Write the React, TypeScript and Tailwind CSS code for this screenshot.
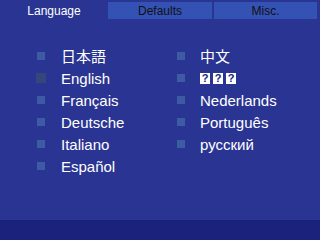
import React from "react";

const left = ["日本語", "English", "Français", "Deutsche", "Italiano", "Español"];
const right = ["中文", "???", "Nederlands", "Português", "русский"];

function Bullet({ selected }: { selected?: boolean }) {
  return (
    <div className="w-2 h-2 flex items-center justify-center shrink-0 overflow-visible">
      {selected ? (
        <div className="w-[10px] h-[10px] shrink-0 bg-[#36457c]" />
      ) : (
        <div className="w-2 h-2 shrink-0 bg-[#3d5aa3]" />
      )}
    </div>
  );
}

function Row({ label, selected, gap }: { label: string; selected?: boolean; gap: string }) {
  return (
    <div className="h-[22px] flex items-center">
      <Bullet selected={selected} />
      {label === "???" ? (
        <div className={`flex gap-[3px] ${gap}`}>
          {[0, 1, 2].map((i) => (
            <span
              key={i}
              className="w-[10px] h-[11px] bg-white text-[#1a237e] text-[11px] leading-[11px] font-bold flex items-center justify-center"
            >
              ?
            </span>
          ))}
        </div>
      ) : (
        <span className={`${gap} text-white text-[15px] leading-none whitespace-nowrap`}>{label}</span>
      )}
    </div>
  );
}

export default function App() {
  return (
    <div
      className="w-[320px] h-[240px] bg-[#2a3492] flex flex-col overflow-hidden"
      style={{ fontFamily: '"Liberation Sans", "Noto Sans CJK JP", sans-serif' }}
    >
      <div className="flex pt-[2px] h-[19px] text-[12px] leading-none">
        <div className="w-[108px] h-[17px] flex items-center justify-center text-white">Language</div>
        <div className="w-[104px] h-[17px] flex items-center justify-center bg-[#3452b4] text-[#111]">Defaults</div>
        <div className="ml-[2px] w-[103px] h-[17px] flex items-center justify-center bg-[#3452b4] text-[#111]">Misc.</div>
      </div>
      <div className="flex mt-[26px] flex-1">
        <div className="w-[140px] pl-[37px] flex flex-col">
          {left.map((l) => (
            <Row key={l} label={l} selected={l === "English"} gap="ml-[16px]" />
          ))}
        </div>
        <div className="pl-[37px] flex flex-col">
          {right.map((l) => (
            <Row key={l} label={l} gap="ml-[15px]" />
          ))}
        </div>
      </div>
      <div className="h-[20px] bg-[#1b227c] shrink-0" />
    </div>
  );
}
